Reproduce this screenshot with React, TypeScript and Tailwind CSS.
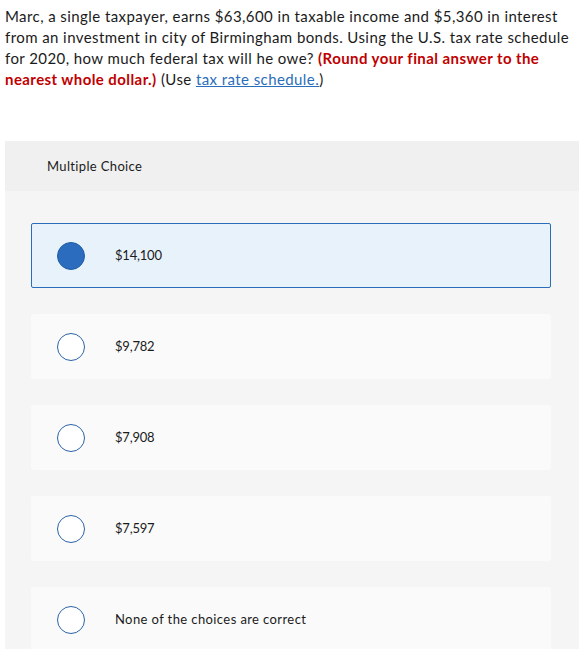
const choices = ['$14,100', '$9,782', '$7,908', '$7,597', 'None of the choices are correct'];

function Radio({ checked }: { checked: boolean }) {
  return checked ? (
    <span className="block h-[28px] w-[28px] shrink-0 rounded-full border border-[#1f5ea8] bg-[#2b6cbf]" />
  ) : (
    <span className="block h-[28px] w-[28px] shrink-0 rounded-full border-[1.5px] border-[#2a64a8] bg-white" />
  );
}

export default function App() {
  const selected = 0;

  return (
    <div className="min-h-screen bg-white font-['Lato','Open_Sans',sans-serif] text-[#1b1b1b]">
      <p className="px-[5px] pt-[6px] text-[15px] leading-[21px] tracking-[0.42px]">
        Marc, a single taxpayer, earns $63,600 in taxable income and $5,360 in interest from an
        investment in city of Birmingham bonds. Using the U.S. tax rate schedule for 2020, how much
        federal tax will he owe?{' '}
        <strong className="font-bold text-[#c00000]">
          (Round your final answer to the nearest whole dollar.)
        </strong>{' '}
        (Use <a className="text-[#2a6ebb] underline">tax rate schedule.</a>)
      </p>

      <div className="ml-[5px] mt-[51px] rounded-tr-[3px] bg-[#f5f5f5]">
        {/* header */}
        <div className="flex h-[50px] items-center bg-[#f0f0f0] pl-[42px] pt-[1px] text-[13px] tracking-[0.35px]">
          Multiple Choice
        </div>

        {/* options */}
        <div className="flex flex-col gap-[26px] pb-[30px] pl-[26px] pr-[28px] pt-[32px]">
          {choices.map((c, i) => (
            <div
              key={c}
              className={`flex h-[65px] items-center gap-[30px] rounded-[2px] pl-[25px] pt-[1px] text-[13px] tracking-[0.4px] ${
                i === selected
                  ? 'border border-[#2a6ebb] bg-[#e8f2fb]'
                  : 'border border-[#fafafa] bg-[#fafafa]'
              }`}
            >
              <Radio checked={i === selected} />
              <span className={i === choices.length - 1 ? '' : 'tracking-[-0.2px]'}>{c}</span>
            </div>
          ))}
        </div>
      </div>
    </div>
  );
}
